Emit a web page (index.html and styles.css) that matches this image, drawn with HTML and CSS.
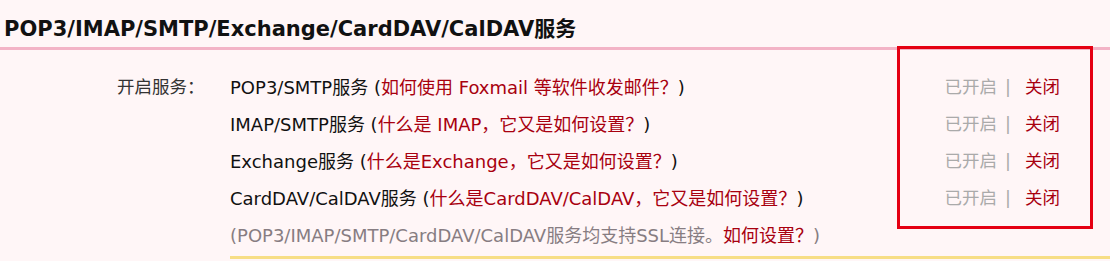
FILE: index.html
```html
<!DOCTYPE html>
<html lang="zh-CN">
<head>
<meta charset="utf-8">
<title>POP3/IMAP/SMTP/Exchange/CardDAV/CalDAV服务</title>
<link rel="stylesheet" href="styles.css">
</head>
<body>
<div class="page">
  <h2 class="title">POP3/IMAP/SMTP/Exchange/CardDAV/CalDAV服务</h2>
  <div class="section">
    <div class="label">开启服务：</div>
    <div class="rows">
      <div class="row">
        <div class="desc">POP3/SMTP服务 (<a class="link">如何使用 Foxmail 等软件收发邮件？</a>)</div>
        <div class="ops"><span class="on">已开启</span><span class="sep">|</span><a class="link">关闭</a></div>
      </div>
      <div class="row">
        <div class="desc">IMAP/SMTP服务 (<a class="link">什么是 IMAP，它又是如何设置？</a>)</div>
        <div class="ops"><span class="on">已开启</span><span class="sep">|</span><a class="link">关闭</a></div>
      </div>
      <div class="row">
        <div class="desc">Exchange服务 (<a class="link">什么是Exchange，它又是如何设置？</a>)</div>
        <div class="ops"><span class="on">已开启</span><span class="sep">|</span><a class="link">关闭</a></div>
      </div>
      <div class="row">
        <div class="desc">CardDAV/CalDAV服务 (<a class="link">什么是CardDAV/CalDAV，它又是如何设置？</a>)</div>
        <div class="ops"><span class="on">已开启</span><span class="sep">|</span><a class="link">关闭</a></div>
      </div>
      <div class="row note">
        <div class="desc">(POP3/IMAP/SMTP/CardDAV/CalDAV服务均支持SSL连接。<a class="link">如何设置？</a>)</div>
      </div>
      <div class="divider"></div>
    </div>
  </div>
  <div class="highlight"></div>
</div>
</body>
</html>
```
FILE: styles.css
```css
html, body {
  margin: 0;
  padding: 0;
  background: #fff6f7;
}
.page {
  position: relative;
  width: 1110px;
  height: 261px;
  overflow: hidden;
  font-family: "DejaVu Sans", "Noto Sans CJK SC", sans-serif;
  font-size: 18px;
  color: #111;
}
.title {
  margin: 0;
  box-sizing: border-box;
  height: 50px;
  padding: 14px 0 0 4px;
  font-family: "DejaVu Sans", "Noto Sans CJK SC", sans-serif;
  font-size: 21px;
  font-weight: bold;
  line-height: 30px;
  color: #111;
  border-bottom: 3px solid #f3b3c6;
}
.section {
  display: flex;
  padding-top: 19px;
}
.label {
  width: 230px;
  box-sizing: border-box;
  padding-left: 117px;
  font-size: 17.5px;
  line-height: 37px;
  color: #333;
}
.rows {
  flex: 1;
}
.row {
  display: flex;
  justify-content: space-between;
  line-height: 37px;
  height: 37px;
  padding-right: 50px;
}
.link {
  color: #a8000f;
  text-decoration: none;
}
.ops {
  font-size: 17.5px;
  color: #aaa;
}
.on {
  color: #aaa;
}
.sep {
  margin: 0 14px 0 8px;
}
.note .desc {
  color: #877d82;
  line-height: 38px;
}
.note {
  height: 39px;
}
.divider {
  height: 3px;
  background: #f7de86;
}
.highlight {
  position: absolute;
  left: 897px;
  top: 46px;
  width: 190px;
  height: 177px;
  border: 3px solid #e50012;
}
```
